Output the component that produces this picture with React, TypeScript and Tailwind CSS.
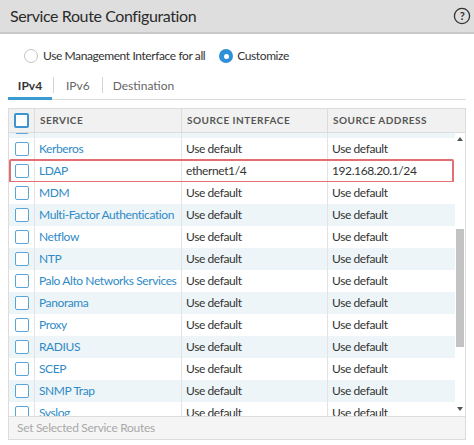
import React from "react";

type Row = { name: string; iface: string; addr: string; flagged?: boolean };

const rows: Row[] = [
  { name: "HTTP", iface: "Use default", addr: "Use default" },
  { name: "Kerberos", iface: "Use default", addr: "Use default" },
  { name: "LDAP", iface: "ethernet1/4", addr: "192.168.20.1/24", flagged: true },
  { name: "MDM", iface: "Use default", addr: "Use default" },
  { name: "Multi-Factor Authentication", iface: "Use default", addr: "Use default" },
  { name: "Netflow", iface: "Use default", addr: "Use default" },
  { name: "NTP", iface: "Use default", addr: "Use default" },
  { name: "Palo Alto Networks Services", iface: "Use default", addr: "Use default" },
  { name: "Panorama", iface: "Use default", addr: "Use default" },
  { name: "Proxy", iface: "Use default", addr: "Use default" },
  { name: "RADIUS", iface: "Use default", addr: "Use default" },
  { name: "SCEP", iface: "Use default", addr: "Use default" },
  { name: "SNMP Trap", iface: "Use default", addr: "Use default" },
  { name: "Syslog", iface: "Use default", addr: "Use default" },
  { name: "Tacplus", iface: "Use default", addr: "Use default" },
];

function Box({ heavy }: { heavy?: boolean }) {
  return (
    <span
      className={
        heavy
          ? "block w-[15px] h-[15px] rounded-[2px] border-2 border-[#3f93cf] bg-white"
          : "block w-[14px] h-[14px] rounded-[2px] border-[1.5px] border-[#5aa5d8] bg-white"
      }
    />
  );
}

function HelpIcon() {
  return (
    <svg width="18" height="18" viewBox="0 0 18 18">
      <circle cx="9" cy="9" r="7.6" fill="none" stroke="#333" strokeWidth="1.3" />
      <text x="9" y="13" textAnchor="middle" fontSize="11" fontWeight="700" fill="#333" fontFamily="Lato, sans-serif">
        ?
      </text>
    </svg>
  );
}

export default function App() {
  return (
    <div
      className="w-[474px] h-[445px] bg-white overflow-hidden text-[#333] text-[12px] tracking-[-0.4px]"
      style={{ fontFamily: "Lato, 'Open Sans', sans-serif" }}
    >
      {/* title bar */}
      <div className="h-[34px] bg-[#dedede] border-b-2 border-[#c9c9c9] flex items-center justify-between pl-[10px] pr-[3px]">
        <span className="text-[16px] tracking-[-0.4px] leading-none text-[#2b2b2b]">Service Route Configuration</span>
        <HelpIcon />
      </div>

      {/* mode radios */}
      <div className="flex items-center h-[20px] mt-[12px] pl-[24px]">
        <span className="w-[14px] h-[14px] rounded-full border border-[#c4c4c4] bg-white" />
        <span className="ml-[5px]">Use Management Interface for all</span>
        <span className="ml-[14px] w-[14px] h-[14px] rounded-full bg-[#2f8fd8] flex items-center justify-center">
          <span className="w-[5px] h-[5px] rounded-full bg-white" />
        </span>
        <span className="ml-[4px]">Customize</span>
      </div>

      {/* tabs */}
      <div className="mt-[8px] mx-[8px] flex items-end border-b border-[#dcdcdc] h-[26px] tracking-normal">
        <div className="relative w-[44px] h-full flex items-start justify-center pt-[3px]">
          <span className="font-bold text-[#333]">IPv4</span>
          <span className="absolute left-0 right-0 -bottom-px h-[3px] bg-[#3a9bd3]" />
        </div>
        <span className="self-start mt-[3px] ml-[1px] w-px h-[16px] bg-[#d4d4d4]" />
        <span className="self-start pt-[3px] ml-[12px] text-[#666]">IPv6</span>
        <span className="self-start mt-[3px] ml-[12px] w-px h-[16px] bg-[#d4d4d4]" />
        <span className="self-start pt-[3px] ml-[10px] text-[#666]">Destination</span>
      </div>

      {/* table */}
      <div className="mt-[8px] mx-[8px] border border-[#dcdcdc]">
        <div className="grid grid-cols-[25px_147px_146px_1fr] h-[24px] bg-[#f1f1f1] border-b border-[#dcdcdc] text-[10px] font-bold tracking-[0.05em] text-[#555]">
          <div className="flex items-center justify-center">
            <Box heavy />
          </div>
          <div className="flex items-center pl-[5px] border-l border-[#dcdcdc]">SERVICE</div>
          <div className="flex items-center pl-[5px] border-l border-[#dcdcdc]">SOURCE INTERFACE</div>
          <div className="flex items-center pl-[5px] border-l border-[#dcdcdc]">SOURCE ADDRESS</div>
        </div>

        <div className="flex h-[283px]">
          <div className="flex-1 overflow-hidden">
            <div className="-mt-[17px]">
              {rows.map((r, i) => (
                <div
                  key={r.name}
                  className={
                    "relative grid grid-cols-[25px_147px_146px_1fr] h-[22px] " +
                    (i % 2 === 0 && !r.flagged ? "bg-[#eef5f8]" : "bg-white")
                  }
                >
                  <div className="flex items-center justify-center">
                    <Box />
                  </div>
                  <div className="flex items-center pl-[4px] border-l border-[#e3e3e3] text-[#2f8ac6] whitespace-nowrap">{r.name}</div>
                  <div className="flex items-center pl-[4px] border-l border-[#e3e3e3] whitespace-nowrap">{r.iface}</div>
                  <div className="flex items-center pl-[4px] border-l border-[#e3e3e3] whitespace-nowrap">{r.addr}</div>
                  {r.flagged && (
                    <span className="absolute left-0 right-[1px] -top-[1px] -bottom-px border-2 border-[#e36f73] rounded-[2px] pointer-events-none" />
                  )}
                </div>
              ))}
            </div>
          </div>
          {/* scrollbar */}
          <div className="w-[10px] bg-white flex flex-col items-center">
            <svg width="6" height="4" viewBox="0 0 6 4" className="mt-[4px]">
              <path d="M0 4 L3 0 L6 4 Z" fill="#555" />
            </svg>
            <div className="mt-[88px] w-[8px] h-[118px] bg-[#c3c3c3]" />
            <div className="flex-1" />
            <svg width="6" height="4" viewBox="0 0 6 4" className="mb-[5px]">
              <path d="M0 0 L6 0 L3 4 Z" fill="#555" />
            </svg>
          </div>
        </div>

        <div className="h-[23px] bg-[#f5f5f5] border-t border-[#dcdcdc] flex items-center pl-[8px] text-[12px] tracking-[-0.3px] text-[#a9a9a9]">
          Set Selected Service Routes
        </div>
      </div>
    </div>
  );
}
